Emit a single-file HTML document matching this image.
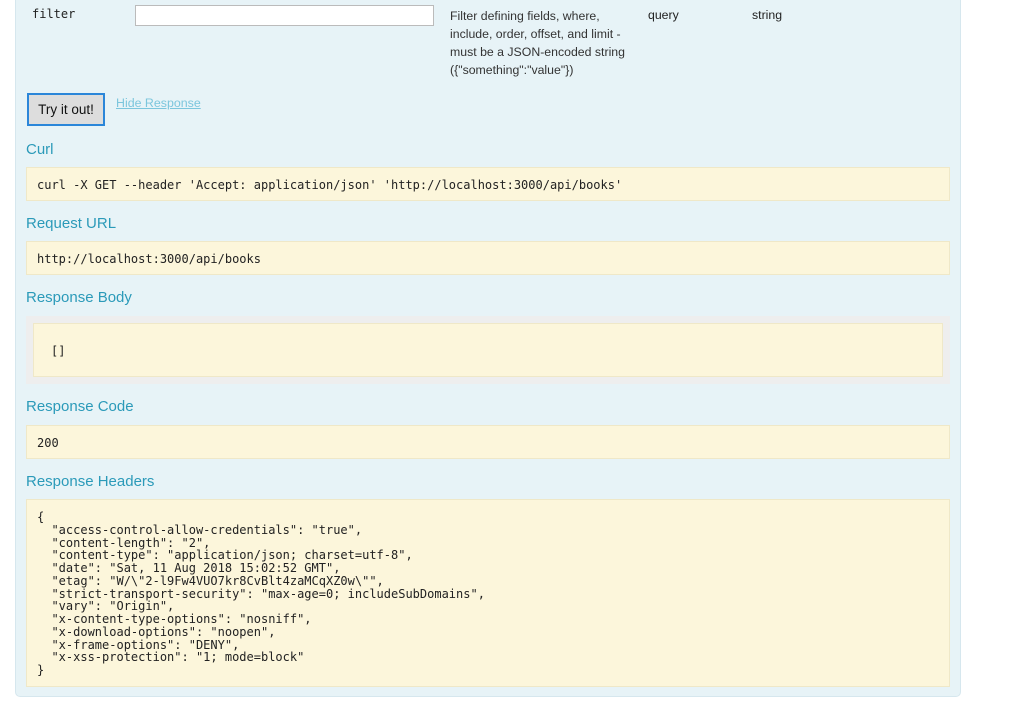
<!DOCTYPE html>
<html><head><meta charset="utf-8"><style>
body{margin:0;background:#fff;width:1024px;height:706px;position:relative;overflow:hidden;font-family:"Liberation Sans",sans-serif;}
.c{position:absolute;left:15px;top:-6px;width:944px;height:701px;background:#e7f3f7;border:1px solid #d6e7ee;border-radius:0 0 5px 5px;}
.a{position:absolute;}
.m{font-family:"DejaVu Sans Mono","Liberation Mono",monospace;}
h4{position:absolute;margin:0;font-weight:normal;font-size:15px;color:#2b9ab9;left:26px;}
.box{position:absolute;left:26px;width:922px;background:#fcf6db;border:1px solid #efe8c8;font-family:"DejaVu Sans Mono","Liberation Mono",monospace;font-size:12px;color:#222;}
</style></head><body>
<div class="c"></div>
<div class="a m" style="left:32px;top:7px;font-size:12px;color:#222">filter</div>
<div class="a" style="left:135px;top:5px;width:297px;height:19px;background:#fff;border:1px solid #bbb"></div>
<div class="a" style="left:450px;top:7px;font-size:12.3px;line-height:18px;color:#333;width:192px">Filter defining fields, where, include, order, offset, and limit - must be a JSON-encoded string ({"something":"value"})</div>
<div class="a" style="left:648px;top:8px;font-size:12.3px;color:#222">query</div>
<div class="a" style="left:752px;top:8px;font-size:12.3px;color:#222">string</div>
<div class="a" style="left:27px;top:93px;width:78px;height:33px;background:#ddd;border:2px solid #2b86d9;box-sizing:border-box;font-size:13.5px;line-height:29px;text-align:center;color:#111">Try it out!</div>
<div class="a" style="left:116px;top:96px;font-size:12.4px;color:#7cc6dd;text-decoration:underline">Hide Response</div>
<h4 style="top:141px">Curl</h4>
<div class="box" style="top:167px;height:34px;line-height:34px;padding-left:10px;box-sizing:border-box;width:924px">curl -X GET --header 'Accept: application/json' 'http://localhost:3000/api/books'</div>
<h4 style="top:215px">Request URL</h4>
<div class="box" style="top:241px;height:34px;line-height:34px;padding-left:10px;box-sizing:border-box;width:924px">http://localhost:3000/api/books</div>
<h4 style="top:289px">Response Body</h4>
<div class="a" style="left:26px;top:316px;width:924px;height:68px;background:#eeeeee"></div>
<div class="box" style="left:33px;top:323px;width:910px;height:54px;box-sizing:border-box;line-height:54px;padding-left:17px">[]</div>
<h4 style="top:398px">Response Code</h4>
<div class="box" style="top:425px;height:34px;line-height:34px;padding-left:10px;box-sizing:border-box;width:924px">200</div>
<h4 style="top:473px">Response Headers</h4>
<div class="box" style="top:499px;height:188px;box-sizing:border-box;width:924px;padding:11px 0 0 10px;font-size:12px;line-height:12.75px;white-space:pre">{
  "access-control-allow-credentials": "true",
  "content-length": "2",
  "content-type": "application/json; charset=utf-8",
  "date": "Sat, 11 Aug 2018 15:02:52 GMT",
  "etag": "W/\"2-l9Fw4VUO7kr8CvBlt4zaMCqXZ0w\"",
  "strict-transport-security": "max-age=0; includeSubDomains",
  "vary": "Origin",
  "x-content-type-options": "nosniff",
  "x-download-options": "noopen",
  "x-frame-options": "DENY",
  "x-xss-protection": "1; mode=block"
}</div>
</body></html>
